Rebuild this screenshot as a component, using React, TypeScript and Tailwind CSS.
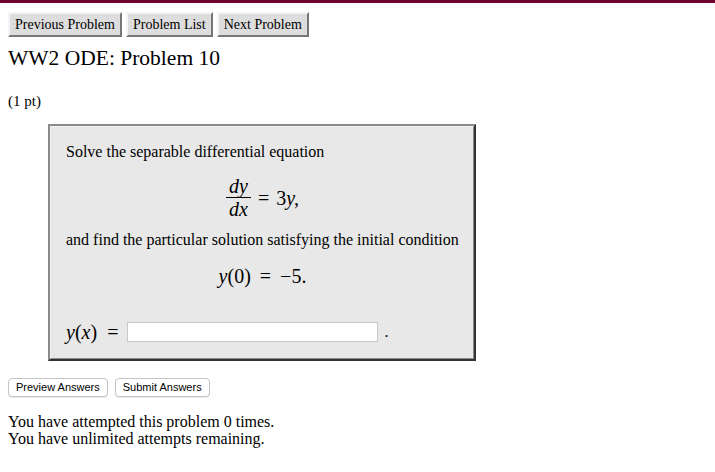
const serif = "font-['Liberation_Serif','Times_New_Roman',serif]";

function NavButton({ label }: { label: string }) {
  return (
    <button className="h-[25px] px-[5px] bg-[#dddddd] text-[14px] text-black border-2 border-t-[#f4f4f4] border-l-[#f4f4f4] border-r-[#777] border-b-[#777] leading-none">
      {label}
    </button>
  );
}

function SmallButton({ label }: { label: string }) {
  return (
    <button className="h-[19px] px-[7px] bg-white text-[11px] leading-none text-black border border-[#c4c4c4] rounded-[4px] font-['Liberation_Sans',Arial,sans-serif] shadow-[0_1px_1px_rgba(0,0,0,0.08)]">
      {label}
    </button>
  );
}

export default function App() {
  return (
    <div className={`min-h-[472px] bg-white text-black ${serif}`}>
      <div className="h-[3px] bg-[#6e0032]" />

      <div className="px-2 pt-[9px]">
        <div className="flex gap-[4px]">
          <NavButton label="Previous Problem" />
          <NavButton label="Problem List" />
          <NavButton label="Next Problem" />
        </div>

        <h1 className="mt-[8px] text-[21.5px] leading-[26px]">WW2 ODE: Problem 10</h1>

        <p className="mt-[22px] text-[15px] leading-[17px]">(1 pt)</p>

        <div className="mt-[14px] ml-[40px] w-[428px] border-2 border-t-[#8a8a8a] border-l-[#8a8a8a] border-r-[#333] border-b-[#333]">
          <div className="border border-t-[#f2f2f2] border-l-[#f2f2f2] border-r-[#8a8a8a] border-b-[#8a8a8a] bg-[#e8e8e8] pl-[15px] pr-[8px] pt-[16px] pb-[14px] text-[16px] leading-[18px] whitespace-nowrap">
            <p>Solve the separable differential equation</p>

            <div className="mt-[14px] flex justify-center items-center italic text-[20px] pr-[6px]">
              <div className="flex flex-col items-center leading-[22px]">
                <span className="px-[2px]">dy</span>
                <span className="block h-px w-[25px] bg-black" />
                <span className="px-[2px]">dx</span>
              </div>
              <span className="not-italic ml-[7px]">=</span>
              <span className="ml-[7px]">
                <span className="not-italic">3</span>y,
              </span>
            </div>

            <p className="mt-[11px]">and find the particular solution satisfying the initial condition</p>

            <div className="mt-[15px] flex justify-center text-[20px] leading-[24px] pr-[6px]">
              <span>
                <i>y</i>(0)<span className="mx-[9px]">=</span>−5.
              </span>
            </div>

            <div className="mt-[32px] flex items-center text-[20px] leading-[24px]">
              <span>
                <i>y</i>(<i>x</i>)<span className="ml-[10px]">=</span>
              </span>
              <input
                type="text"
                className="ml-[9px] h-[20px] w-[251px] bg-white border border-[#c8c8c8] outline-none"
              />
              <span className="ml-[6px] text-[16px]">.</span>
            </div>
          </div>
        </div>

        <div className="mt-[17px] flex gap-[7px]">
          <SmallButton label="Preview Answers" />
          <SmallButton label="Submit Answers" />
        </div>

        <div className="mt-[16px] text-[16px] leading-[17px]">
          <p>You have attempted this problem 0 times.</p>
          <p>You have unlimited attempts remaining.</p>
        </div>
      </div>
    </div>
  );
}
